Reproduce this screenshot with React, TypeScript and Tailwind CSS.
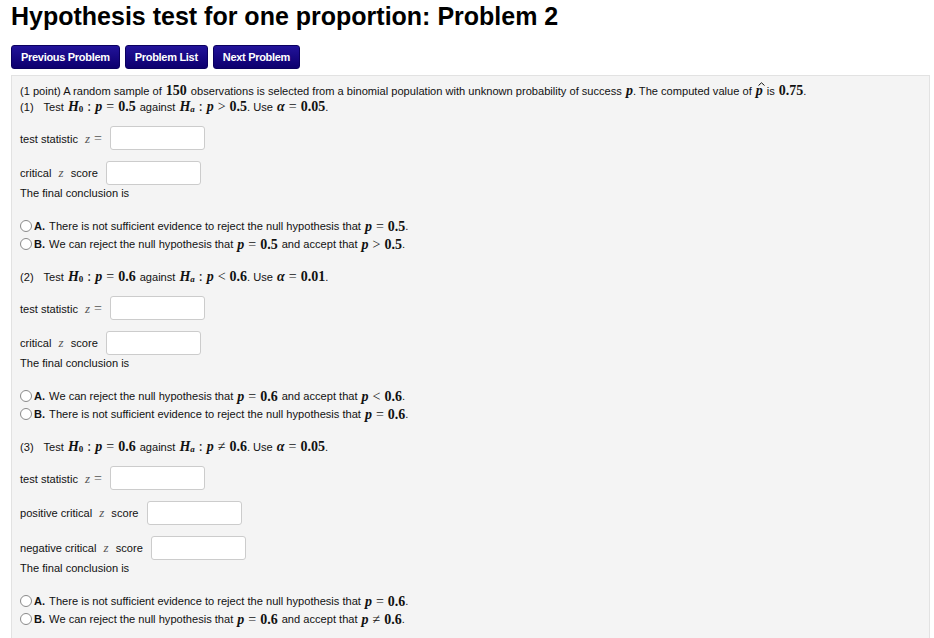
import type { ReactNode } from "react";

const serif = "font-['Liberation_Serif',serif] text-[14px]";

function V({ children }: { children: ReactNode }) {
  return <span className={`${serif} italic font-bold`}>{children}</span>;
}

function N({ children }: { children: ReactNode }) {
  return <span className={`${serif} font-bold`}>{children}</span>;
}

function Op({ children }: { children: ReactNode }) {
  return <span className={`${serif} mx-[4px]`}>{children}</span>;
}

function H({ sub }: { sub: string }) {
  return (
    <span className={`${serif} italic font-bold`}>
      H<sub className="text-[9px] not-italic font-bold relative top-[1px]">{sub === "a" ? <i>a</i> : sub}</sub>
    </span>
  );
}

function Test({ n, h0, rel, ha, alpha }: { n: number; h0: string; rel: string; ha: string; alpha: string }) {
  return (
    <div className="h-4 leading-4 flex items-center">
      <span>({n})</span>
      <span className="ml-[10px]">Test</span>
      <span className="ml-[4px]">
        <H sub="0" />
        <Op>:</Op>
        <V>p</V>
        <Op>=</Op>
        <N>{h0}</N>
      </span>
      <span className="ml-[4px]">against</span>
      <span className="ml-[4px]">
        <H sub="a" />
        <Op>:</Op>
        <V>p</V>
        <Op>{rel}</Op>
        <N>{ha}</N>
      </span>
      <span>. Use</span>
      <span className="ml-[4px]">
        <V>α</V>
        <Op>=</Op>
        <N>{alpha}</N>
      </span>
      <span>.</span>
    </div>
  );
}

function Field({ label }: { label: ReactNode }) {
  return (
    <div className="flex items-center h-6 mt-[11px]">
      <span className="whitespace-nowrap">{label}</span>
      <input
        type="text"
        aria-label="answer"
        className="ml-[8px] h-6 w-[95px] rounded-[3px] border border-[#cccccc] bg-white outline-none"
      />
    </div>
  );
}

function Z() {
  return <span className="font-['Liberation_Serif',serif] italic text-[13px] text-[#555] mx-[4px]">z</span>;
}

function Eq() {
  return <span className="font-['Liberation_Serif',serif] text-[14px] text-[#555]">=</span>;
}

function Choice({ letter, children }: { letter: string; children: ReactNode }) {
  return (
    <div className="flex items-center h-[18px]">
      <span className="inline-block w-[12px] h-[12px] rounded-full border border-[#8a8a8a] bg-white mr-[2px]" />
      <b>{letter}.</b>
      <span className="ml-[4px] flex items-center">{children}</span>
    </div>
  );
}

function Conclusion() {
  return <div className="h-4 leading-4">The final conclusion is</div>;
}

export default function App() {
  return (
    <div className="min-h-[638px] bg-white font-['Liberation_Sans',Arial,sans-serif] text-[#111] text-[11.1px] pl-[11px] pr-[4px] overflow-hidden">
      <h1 className="text-[25px] font-bold text-black leading-[30px] pt-[1px]">Hypothesis test for one proportion: Problem 2</h1>

      <div className="flex gap-[5px] mt-[14px]">
        {["Previous Problem", "Problem List", "Next Problem"].map((t) => (
          <button
            key={t}
            className="h-6 px-[9px] rounded-[3px] border border-[#0b0060] bg-gradient-to-b from-[#22139a] to-[#0d006e] text-white text-[11px] font-bold tracking-[-0.3px]"
          >
            {t}
          </button>
        ))}
      </div>

      <div className="mt-[6px] border border-[#e2e2e2] bg-[#f4f4f4] px-[8px] pt-[7px] pb-[40px]">
        <div className="h-4 leading-4 flex items-center whitespace-nowrap">
          <span>(1 point) A random sample of</span>
          <span className="mx-[4px]"><N>150</N></span>
          <span>observations is selected from a binomial population with unknown probability of success</span>
          <span className="ml-[4px]"><V>p</V></span>
          <span>. The computed value of</span>
          <span className="mx-[4px] relative">
            <V>p</V>
            <svg className="absolute left-[2px] -top-[1px]" width="7" height="4" viewBox="0 0 7 4">
              <path d="M0.5 3.5 L3.5 0.8 L6.5 3.5" fill="none" stroke="#111" strokeWidth="1" />
            </svg>
          </span>
          <span>is</span>
          <span className="ml-[4px]"><N>0.75</N></span>
          <span>.</span>
        </div>
        <Test n={1} h0="0.5" rel=">" ha="0.5" alpha="0.05" />

        <Field label={<>test statistic <Z /><Eq /></>} />
        <Field label={<>critical <Z /> score</>} />
        <Conclusion />
        <div className="mt-[16px]">
          <Choice letter="A">
            There is not sufficient evidence to reject the null hypothesis that<span className="ml-[4px]"><V>p</V><Op>=</Op><N>0.5</N></span>.
          </Choice>
          <Choice letter="B">
            We can reject the null hypothesis that<span className="mx-[4px]"><V>p</V><Op>=</Op><N>0.5</N></span>and accept that<span className="ml-[4px]"><V>p</V><Op>&gt;</Op><N>0.5</N></span>.
          </Choice>
        </div>

        <div className="mt-[16px]">
          <Test n={2} h0="0.6" rel="<" ha="0.6" alpha="0.01" />
        </div>
        <Field label={<>test statistic <Z /><Eq /></>} />
        <Field label={<>critical <Z /> score</>} />
        <Conclusion />
        <div className="mt-[16px]">
          <Choice letter="A">
            We can reject the null hypothesis that<span className="mx-[4px]"><V>p</V><Op>=</Op><N>0.6</N></span>and accept that<span className="ml-[4px]"><V>p</V><Op>&lt;</Op><N>0.6</N></span>.
          </Choice>
          <Choice letter="B">
            There is not sufficient evidence to reject the null hypothesis that<span className="ml-[4px]"><V>p</V><Op>=</Op><N>0.6</N></span>.
          </Choice>
        </div>

        <div className="mt-[16px]">
          <Test n={3} h0="0.6" rel="≠" ha="0.6" alpha="0.05" />
        </div>
        <Field label={<>test statistic <Z /><Eq /></>} />
        <Field label={<>positive critical <Z /> score</>} />
        <Field label={<>negative critical <Z /> score</>} />
        <Conclusion />
        <div className="mt-[16px]">
          <Choice letter="A">
            There is not sufficient evidence to reject the null hypothesis that<span className="ml-[4px]"><V>p</V><Op>=</Op><N>0.6</N></span>.
          </Choice>
          <Choice letter="B">
            We can reject the null hypothesis that<span className="mx-[4px]"><V>p</V><Op>=</Op><N>0.6</N></span>and accept that<span className="ml-[4px]"><V>p</V><Op>≠</Op><N>0.6</N></span>.
          </Choice>
        </div>
      </div>
    </div>
  );
}
